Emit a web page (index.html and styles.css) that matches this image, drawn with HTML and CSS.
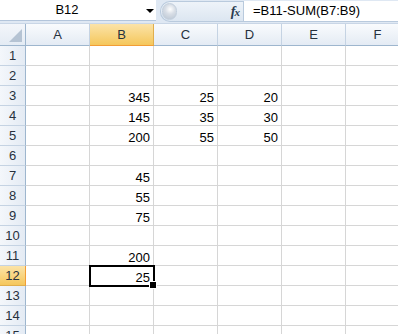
FILE: index.html
```html
<!DOCTYPE html>
<html>
<head>
<meta charset="utf-8">
<link rel="stylesheet" href="styles.css">
</head>
<body>
<div class="app">
  <div class="fbar">
    <div class="namebox">
      <span class="name">B12</span>
      <span class="drop"></span>
    </div>
    <div class="fxzone">
      <span class="knob"></span>
      <span class="fx">f<i>x</i></span>
    </div>
    <div class="input">=B11-SUM(B7:B9)</div>
  </div>
  <div class="sheet">
    <div class="corner"><span class="tri"></span></div>
    <div class="ch">A</div><div class="ch sel">B</div><div class="ch">C</div><div class="ch">D</div><div class="ch">E</div><div class="ch">F</div>

    <div class="rh">1</div><div class="c"></div><div class="c"></div><div class="c"></div><div class="c"></div><div class="c"></div><div class="c"></div>
    <div class="rh">2</div><div class="c"></div><div class="c"></div><div class="c"></div><div class="c"></div><div class="c"></div><div class="c"></div>
    <div class="rh">3</div><div class="c"></div><div class="c">345</div><div class="c">25</div><div class="c">20</div><div class="c"></div><div class="c"></div>
    <div class="rh">4</div><div class="c"></div><div class="c">145</div><div class="c">35</div><div class="c">30</div><div class="c"></div><div class="c"></div>
    <div class="rh">5</div><div class="c"></div><div class="c">200</div><div class="c">55</div><div class="c">50</div><div class="c"></div><div class="c"></div>
    <div class="rh">6</div><div class="c"></div><div class="c"></div><div class="c"></div><div class="c"></div><div class="c"></div><div class="c"></div>
    <div class="rh">7</div><div class="c"></div><div class="c">45</div><div class="c"></div><div class="c"></div><div class="c"></div><div class="c"></div>
    <div class="rh">8</div><div class="c"></div><div class="c">55</div><div class="c"></div><div class="c"></div><div class="c"></div><div class="c"></div>
    <div class="rh">9</div><div class="c"></div><div class="c">75</div><div class="c"></div><div class="c"></div><div class="c"></div><div class="c"></div>
    <div class="rh">10</div><div class="c"></div><div class="c"></div><div class="c"></div><div class="c"></div><div class="c"></div><div class="c"></div>
    <div class="rh">11</div><div class="c"></div><div class="c">200</div><div class="c"></div><div class="c"></div><div class="c"></div><div class="c"></div>
    <div class="rh sel">12</div><div class="c"></div><div class="c active">25<span class="handle"></span></div><div class="c"></div><div class="c"></div><div class="c"></div><div class="c"></div>
    <div class="rh">13</div><div class="c"></div><div class="c"></div><div class="c"></div><div class="c"></div><div class="c"></div><div class="c"></div>
    <div class="rh">14</div><div class="c"></div><div class="c"></div><div class="c"></div><div class="c"></div><div class="c"></div><div class="c"></div>
    <div class="rh">15</div><div class="c"></div><div class="c"></div><div class="c"></div><div class="c"></div><div class="c"></div><div class="c"></div>
  </div>
</div>
</body>
</html>
```
FILE: styles.css
```css
html, body {
  margin: 0;
  padding: 0;
  background: #ffffff;
  overflow: hidden;
}
.app {
  width: 398px;
  height: 334px;
  overflow: hidden;
  font-family: "Liberation Sans", Arial, sans-serif;
  font-size: 13px;
  color: #000;
}
.fbar {
  display: flex;
  height: 24px;
  box-sizing: border-box;
  background: #dfe8f3;
  border-bottom: 1px solid #c9d6e6;
}
.namebox {
  width: 156px;
  height: 21px;
  box-sizing: border-box;
  background: #fff;
  border-bottom: 1px solid #b3c5db;
  display: flex;
  align-items: center;
  position: relative;
}
.name {
  flex: 1;
  text-align: center;
  padding-right: 12px;
  font-size: 13px;
  line-height: 20px;
}
.drop {
  width: 0;
  height: 0;
  border-left: 4px solid transparent;
  border-right: 4px solid transparent;
  border-top: 4px solid #000;
  margin-right: 2px;
  margin-top: 1px;
}
.fxzone {
  margin-left: 4px;
  width: 83px;
  height: 21px;
  box-sizing: border-box;
  margin-top: 1px;
  border: 1px solid #b9cadd;
  border-right: none;
  border-radius: 10px 0 0 10px;
  background: linear-gradient(#eef3f9, #dce6f1);
  display: flex;
  align-items: center;
}
.knob {
  width: 15px;
  height: 17px;
  margin-left: 1px;
  border-radius: 9px;
  background: radial-gradient(circle at 55% 35%, #ffffff 0, #d8dee6 40%, #b7c3d1 100%);
  border: 1px solid #c3cfdd;
  box-sizing: border-box;
}
.fx {
  margin-left: auto;
  margin-right: 4px;
  font-family: "Liberation Serif", serif;
  font-style: italic;
  font-weight: bold;
  font-size: 14px;
  color: #2a3b4f;
  letter-spacing: -1px;
}
.fx i {
  font-size: 11px;
}
.input {
  flex: 1;
  height: 21px;
  box-sizing: border-box;
  background: #fff;
  margin-top: 1px;
  border: 1px solid #b9cadd;
  border-right: none;
  border-top: none;
  padding-left: 9px;
  line-height: 19px;
  white-space: nowrap;
}
.sheet {
  display: grid;
  grid-template-columns: 26px repeat(6, 64px);
  grid-template-rows: 22px;
  grid-auto-rows: 20px;
}
.sheet > div {
  box-sizing: border-box;
  border-right: 1px solid #d6d6d6;
  border-bottom: 1px solid #d6d6d6;
}
.sheet .corner {
  background: linear-gradient(#f3f6fa, #e4ebf4);
  border-right: 1px solid #9eb6ce;
  border-bottom: 1px solid #9eb6ce;
  position: relative;
}
.tri {
  position: absolute;
  right: 3px;
  bottom: 3px;
  width: 0;
  height: 0;
  border-left: 13px solid transparent;
  border-bottom: 13px solid #b5c3d3;
}
.sheet .ch {
  background: linear-gradient(#f9fbfd, #e4ebf4);
  border-right: 1px solid #c5d3e3;
  border-bottom: 1px solid #9eb6ce;
  text-align: center;
  line-height: 21px;
  color: #27313d;
}
.sheet .ch.sel {
  background: linear-gradient(#fbe3a8, #f5c75c);
  border-right: 1px solid #e0ae4d;
  border-bottom: 1px solid #f29d36;
}
.sheet .rh {
  background: linear-gradient(90deg, #f4f7fb, #e4ebf4);
  border-right: 1px solid #9eb6ce;
  border-bottom: 1px solid #c5d3e3;
  text-align: center;
  line-height: 19px;
  color: #27313d;
}
.sheet .rh.sel {
  background: linear-gradient(#fbe3a8, #f5c75c);
  border-right: 1px solid #f29d36;
  border-bottom: 1px solid #e0ae4d;
}
.sheet .c {
  text-align: right;
  padding-right: 3px;
  line-height: 19px;
  padding-top: 2px;
}
.sheet .c.active {
  position: relative;
  outline: 2px solid #000;
  outline-offset: -1px;
  z-index: 1;
}
.handle {
  position: absolute;
  right: -3px;
  bottom: -3px;
  width: 6px;
  height: 6px;
  background: #000;
  border: 1px solid #fff;
  box-sizing: content-box;
  margin: -1px;
}
```
